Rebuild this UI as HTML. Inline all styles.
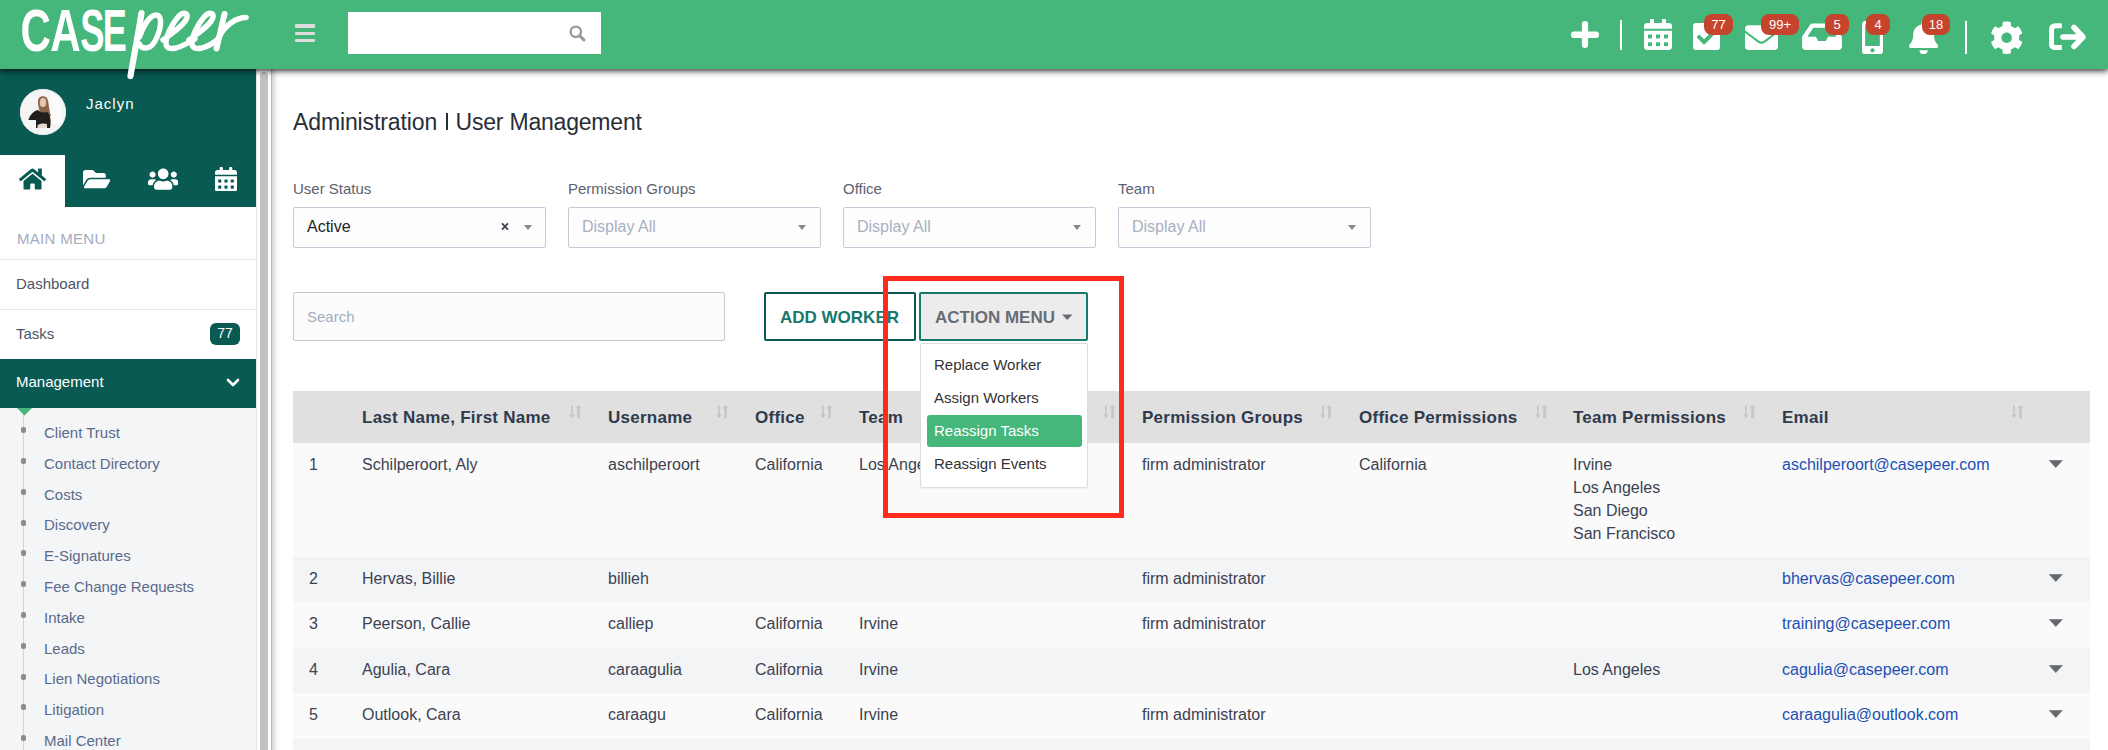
<!DOCTYPE html>
<html><head><meta charset="utf-8">
<style>
*{box-sizing:border-box;margin:0;padding:0}
html,body{width:2108px;height:750px;overflow:hidden;background:#fff;font-family:"Liberation Sans",sans-serif}
.a{position:absolute}
.t{position:absolute;white-space:nowrap;line-height:1}
#hdr{left:0;top:0;width:2108px;height:69px;background:#45b77b;box-shadow:0 2px 6px rgba(0,0,0,.8);z-index:5}
.bdg{top:14px;height:21px;border-radius:8px;background:#c6432c;color:#fff;font-size:13px;line-height:22.5px;text-align:center}
.sel{top:207px;width:253px;height:41px;border:1px solid #c5cad6;border-radius:2px;background:#fdfdfd}
.car{top:224.5px;width:0;height:0;border-left:4px solid transparent;border-right:4px solid transparent;border-top:5px solid #85888d}
.th{top:409px;font-size:17px;font-weight:bold;color:#2f3a4c;letter-spacing:0.25px}
.td{font-size:16px;color:#3b4252}
.em{color:#2150b2}
</style></head><body>
<div id="hdr" class="a">
<svg class="a" style="left:0;top:0;overflow:visible" width="260" height="80" viewBox="0 0 260 80">
<g fill="#fff" font-family="Liberation Sans" font-weight="bold" font-size="59">
<text transform="translate(20.6,51) scale(0.713,1)">C</text>
<text transform="translate(50.3,51) scale(0.715,1)">A</text>
<text transform="translate(80.2,51) scale(0.617,1)">S</text>
<text transform="translate(102.75,51) scale(0.612,1)">E</text>
</g>
<g fill="none" stroke="#fff" stroke-linecap="round" stroke-linejoin="round">
<path d="M141.5,13 C139,30 134,55 130.5,76" stroke-width="6.2"/>
<path d="M139.5,37 C143,26 150,15 156,15 C161,15 161.5,22 159.5,30 C156.5,40 152,48 146,48 C142,48 140,46 139.5,44" stroke-width="5.4"/>
<path d="M163,40 C171,34 186,24 187,17 C188,12 182,12 178,17 C172,24 166,36 166,43 C166,49 171,49 176,48 C183,46 190,42 195,39" stroke-width="5.4"/>
<path d="M189,40 C197,34 212,24 213,17 C214,12 208,12 204,17 C198,24 192,36 192,43 C192,49 197,49 202,48 C209,46 215,42 219,38" stroke-width="5.4"/>
<path d="M224.5,14 C222,25 219,38 216.5,48.5" stroke-width="6"/>
<path d="M220,35 C226,25 236,17.5 246,17.5" stroke-width="5.6"/>
</g>
</svg>
<div class="a" style="left:295px;top:24.2px;width:20px;height:3.4px;background:#dcdcdc;border-radius:1px"></div>
<div class="a" style="left:295px;top:31.7px;width:20px;height:3.4px;background:#dcdcdc;border-radius:1px"></div>
<div class="a" style="left:295px;top:39px;width:20px;height:3.4px;background:#dcdcdc;border-radius:1px"></div>
<div class="a" style="left:348px;top:12px;width:253px;height:42px;background:#fff"></div>
<svg class="a" style="left:566px;top:22px" width="24" height="24" viewBox="0 0 24 24"><circle cx="9.8" cy="9.8" r="5.2" fill="none" stroke="#9a9a9a" stroke-width="2.4"/><line x1="13.6" y1="13.6" x2="18" y2="18" stroke="#9a9a9a" stroke-width="3" stroke-linecap="round"/></svg>
<!-- plus -->
<svg class="a" style="left:1571px;top:21px" width="28" height="27" viewBox="0 0 28 27"><rect x="0" y="10.5" width="28" height="6.4" rx="3" fill="#fff"/><rect x="10.9" y="0" width="6.2" height="27" rx="3" fill="#fff"/></svg>
<div class="a" style="left:1620px;top:20px;width:2px;height:30px;background:#fff"></div>
<!-- calendar -->
<svg class="a" style="left:1644px;top:19px" width="28" height="31" viewBox="0 0 448 512" preserveAspectRatio="none"><path fill="#fff" d="M0 464c0 26.5 21.5 48 48 48h352c26.5 0 48-21.5 48-48V192H0v272zm320-196c0-6.6 5.4-12 12-12h40c6.6 0 12 5.4 12 12v40c0 6.6-5.4 12-12 12h-40c-6.6 0-12-5.4-12-12v-40zm0 128c0-6.600 5.4-12 12-12h40c6.6 0 12 5.4 12 12v40c0 6.6-5.4 12-12 12h-40c-6.6 0-12-5.4-12-12v-40zM192 268c0-6.6 5.4-12 12-12h40c6.6 0 12 5.4 12 12v40c0 6.6-5.4 12-12 12h-40c-6.6 0-12-5.4-12-12v-40zm0 128c0-6.6 5.4-12 12-12h40c6.6 0 12 5.4 12 12v40c0 6.6-5.4 12-12 12h-40c-6.6 0-12-5.4-12-12v-40zM64 268c0-6.6 5.4-12 12-12h40c6.6 0 12 5.4 12 12v40c0 6.6-5.4 12-12 12H76c-6.6 0-12-5.4-12-12v-40zm0 128c0-6.6 5.4-12 12-12h40c6.6 0 12 5.4 12 12v40c0 6.6-5.4 12-12 12H76c-6.6 0-12-5.4-12-12v-40zM400 64h-48V16c0-8.8-7.2-16-16-16h-32c-8.8 0-16 7.2-16 16v48H160V16c0-8.8-7.2-16-16-16h-32c-8.8 0-16 7.2-16 16v48H48C21.5 64 0 85.5 0 112v48h448v-48c0-26.5-21.5-48-48-48z"/></svg>
<!-- check square -->
<svg class="a" style="left:1693px;top:21px" width="27" height="31" viewBox="0 0 448 512" preserveAspectRatio="none"><path fill="#fff" d="M400 480H48c-26.51 0-48-21.49-48-48V80c0-26.51 21.49-48 48-48h352c26.51 0 48 21.49 48 48v352c0 26.51-21.49 48-48 48zm-204.686-98.059l184-184c6.248-6.248 6.248-16.379 0-22.627l-22.627-22.627c-6.248-6.248-16.379-6.249-22.628 0L184 302.745l-70.059-70.059c-6.248-6.248-16.379-6.248-22.628 0l-22.627 22.627c-6.248 6.248-6.248 16.379 0 22.627l104 104c6.249 6.25 16.379 6.25 22.628.001z"/></svg>
<!-- envelope -->
<svg class="a" style="left:1745px;top:21px" width="33" height="33" viewBox="0 0 512 512"><path fill="#fff" d="M502.3 190.8c3.9-3.1 9.7-.2 9.7 4.7V400c0 26.5-21.5 48-48 48H48c-26.5 0-48-21.5-48-48V195.6c0-5 5.7-7.8 9.7-4.700 22.4 17.4 52.1 39.5 154.1 113.6 21.1 15.4 56.7 47.8 92.2 47.6 35.7.3 72-32.8 92.3-47.6 102-74.1 131.6-96.3 154-113.700zM256 320c23.2.4 56.6-29.2 73.4-41.4 132.7-96.3 142.8-104.7 173.4-128.7 5.8-4.5 9.2-11.5 9.2-18.9v-19c0-26.5-21.5-48-48-48H48C21.5 64 0 85.5 0 112v19c0 7.4 3.4 14.3 9.2 18.9 30.6 23.9 40.7 32.4 173.4 128.7 16.8 12.2 50.2 41.8 73.4 41.4z"/></svg>
<!-- inbox -->
<svg class="a" style="left:1802px;top:19.3px" width="40" height="35.4" viewBox="0 0 576 512"><path fill="#fff" d="M567.938 243.908L462.25 85.374A48.003 48.003 0 0 0 422.311 64H153.689a48 48 0 0 0-39.938 21.374L8.062 243.908A47.994 47.994 0 0 0 0 270.533V400c0 26.51 21.49 48 48 48h480c26.51 0 48-21.49 48-48V270.533a47.994 47.994 0 0 0-8.062-26.625zM162.252 128h251.497l85.333 128H376l-32 64H232l-32-64H76.918l85.334-128z"/></svg>
<!-- mobile -->
<svg class="a" style="left:1862px;top:20.9px" width="21" height="33.4" viewBox="0 0 320 512" preserveAspectRatio="none"><path fill="#fff" d="M272 0H48C21.5 0 0 21.5 0 48v416c0 26.5 21.5 48 48 48h224c26.5 0 48-21.5 48-48V48c0-26.5-21.5-48-48-48zM160 480c-17.7 0-32-14.3-32-32s14.3-32 32-32 32 14.3 32 32-14.3 32-32 32zm112-108c0 6.6-5.4 12-12 12H60c-6.6 0-12-5.4-12-12V60c0-6.6 5.4-12 12-12h200c6.6 0 12 5.4 12 12v312z"/></svg>
<!-- bell -->
<svg class="a" style="left:1909px;top:20.7px" width="29.2" height="33.4" viewBox="0 0 448 512"><path fill="#fff" d="M224 512c35.32 0 63.970-28.65 63.970-64H160.030c0 35.35 28.650 64 63.970 64zm215.390-149.710c-19.320-20.760-55.470-51.990-55.470-154.290 0-77.700-54.480-139.900-127.940-155.160V32c0-17.670-14.320-32-32-32s-32 14.330-32 32v20.840C118.560 68.100 64.080 130.300 64.080 208c0 102.300-36.150 133.530-55.470 154.290-6 6.450-8.660 14.160-8.610 21.710.11 16.400 12.980 32 32.100 32h383.800c19.120 0 32-15.600 32.100-32 .05-7.550-2.610-15.270-8.610-21.710z"/></svg>
<div class="a" style="left:1965px;top:21px;width:2px;height:33px;background:#fff"></div>
<!-- cog -->
<svg class="a" style="left:1989.8px;top:21.1px" width="33.4" height="33.4" viewBox="0 0 512 512"><path fill="#fff" d="M487.4 315.7l-42.6-24.6c4.3-23.2 4.3-47 0-70.2l42.6-24.6c4.9-2.8 7.1-8.6 5.5-14-11.1-35.6-30-67.8-54.7-94.6-3.8-4.1-10-5.1-14.8-2.3L380.8 110c-17.9-15.4-38.5-27.3-60.8-35.1V25.8c0-5.6-3.9-10.5-9.4-11.7-36.7-8.2-74.3-7.8-109.2 0-5.5 1.2-9.4 6.1-9.4 11.7V75c-22.2 7.9-42.8 19.8-60.8 35.1L88.7 85.5c-4.9-2.8-11-1.9-14.8 2.3-24.7 26.7-43.6 58.9-54.7 94.6-1.7 5.4.6 11.2 5.5 14L67.3 221c-4.3 23.2-4.3 47 0 70.2l-42.6 24.6c-4.9 2.8-7.1 8.6-5.5 14 11.1 35.6 30 67.8 54.7 94.6 3.8 4.1 10 5.1 14.8 2.3l42.6-24.6c17.9 15.4 38.5 27.3 60.8 35.1v49.2c0 5.6 3.9 10.5 9.4 11.7 36.7 8.2 74.3 7.8 109.2 0 5.5-1.2 9.4-6.1 9.4-11.7v-49.2c22.2-7.9 42.8-19.8 60.8-35.1l42.6 24.6c4.9 2.8 11 1.9 14.8-2.3 24.7-26.7 43.6-58.9 54.7-94.6 1.5-5.5-.7-11.3-5.6-14.1zM256 336c-44.1 0-80-35.9-80-80s35.9-80 80-80 80 35.9 80 80-35.9 80-80 80z"/></svg>
<!-- sign out -->
<svg class="a" style="left:2046px;top:20px" width="42" height="34" viewBox="0 0 42 34"><path d="M15.8 5.8H9.5C6.8 5.8 5.5 7.3 5.5 10V24C5.5 26.7 6.8 27.5 9.5 27.5H15.8" fill="none" stroke="#fff" stroke-width="5"/><path d="M17 17H35M28 7.5L37 17L28 26.5" fill="none" stroke="#fff" stroke-width="5.6" stroke-linecap="round" stroke-linejoin="round"/></svg>
<!-- badges -->
<div class="a bdg" style="left:1704px;width:29px">77</div>
<div class="a bdg" style="left:1761px;width:38px">99+</div>
<div class="a bdg" style="left:1825px;width:24px">5</div>
<div class="a bdg" style="left:1866px;width:24px">4</div>
<div class="a bdg" style="left:1922px;width:28px">18</div>
</div>
<div class="a" style="left:0;top:69px;width:256px;height:138px;background:#085a52"></div>
<div class="a" style="left:0;top:155px;width:65px;height:52px;background:#fff"></div>
<!-- avatar -->
<svg class="a" style="left:20px;top:89px" width="46" height="46" viewBox="0 0 46 46">
<defs><clipPath id="cc"><circle cx="23" cy="23" r="23"/></clipPath></defs>
<circle cx="23" cy="23" r="23" fill="#f4f4f4"/>
<g clip-path="url(#cc)">
<rect x="30" y="5" width="12" height="30" fill="#fbfbfb"/>
<path d="M18,12 C18,6 27,5.5 28,11.5 C29,18 29.5,23 31,27 L23,29 C20,25 18,18 18,12Z" fill="#8f6446"/>
<ellipse cx="23" cy="13.5" rx="3.2" ry="4.6" fill="#e2c5b2"/>
<path d="M7.5,34 C9,27 13,22 18,21 C20,23.5 24,24 27,23 C30,25 31,30 30.5,36 L30,39 L10,39Z" fill="#231e1e"/>
<path d="M17.5,36 C20,34.5 24,34 27,35 L27,39 L17.5,39Z" fill="#e4d8d0"/>
<rect x="3" y="31" width="13" height="14" fill="#f7f7f7"/>
</g>
<circle cx="23" cy="23" r="22.5" fill="none" stroke="#e8eaea" stroke-width="1"/>
</svg>
<div class="t" style="left:86px;top:96px;font-size:15px;color:#fff;letter-spacing:1px">Jaclyn</div>
<!-- tab icons -->
<svg class="a" style="left:18.6px;top:166.5px" width="27" height="24" viewBox="0 0 576 512"><path fill="#085a52" d="M280.37 148.26L96 300.11V464a16 16 0 0 0 16 16l112.06-.29a16 16 0 0 0 15.92-16V368a16 16 0 0 1 16-16h64a16 16 0 0 1 16 16v95.64a16 16 0 0 0 16 16.05L464 480a16 16 0 0 0 16-16V300L295.67 148.26a12.19 12.19 0 0 0-15.3 0zM571.6 251.47L488 182.56V44.05a12 12 0 0 0-12-12h-56a12 12 0 0 0-12 12v72.61L318.47 43a48 48 0 0 0-61 0L4.34 251.47a12 12 0 0 0-1.6 16.9l25.5 31A12 12 0 0 0 45.15 301l235.22-193.74a12.19 12.19 0 0 1 15.3 0L530.9 301a12 12 0 0 0 16.9-1.6l25.5-31a12 12 0 0 0-1.7-16.93z"/></svg>
<svg class="a" style="left:83px;top:167.2px" width="27.4" height="24.4" viewBox="0 0 576 512"><path fill="#fff" d="M572.694 292.093L500.27 416.248A63.997 63.997 0 0 1 444.989 448H45.025c-18.523 0-30.064-20.093-20.731-36.093l72.424-124.155A64 64 0 0 1 152 256h399.964c18.523 0 30.064 20.093 20.73 36.093zM152 224h328v-48c0-26.51-21.49-48-48-48H272l-64-64H48C21.49 64 0 85.49 0 112v278.046l69.077-118.418C86.214 242.25 117.989 224 152 224z"/></svg>
<svg class="a" style="left:148px;top:166.5px" width="30.4" height="24.3" viewBox="0 0 640 512"><path fill="#fff" d="M96 224c35.3 0 64-28.7 64-64s-28.7-64-64-64-64 28.7-64 64 28.7 64 64 64zm448 0c35.3 0 64-28.7 64-64s-28.7-64-64-64-64 28.7-64 64 28.7 64 64 64zm32 32h-64c-17.6 0-33.5 7.1-45.1 18.6 40.3 22.1 68.9 62 75.1 109.4h66c17.7 0 32-14.3 32-32v-32c0-35.3-28.7-64-64-64zm-256 0c61.9 0 112-50.1 112-112S381.9 32 320 32 208 82.1 208 144s50.1 112 112 112zm76.8 32h-8.3c-20.8 10-43.9 16-68.5 16s-47.6-6-68.5-16h-8.3C179.6 288 128 339.6 128 403.2V432c0 26.5 21.5 48 48 48h288c26.5 0 48-21.5 48-48v-28.8c0-63.6-51.6-115.2-115.2-115.2zm-223.7-13.4C161.5 263.1 145.6 256 128 256H64c-35.3 0-64 28.7-64 64v32c0 17.7 14.3 32 32 32h65.9c6.3-47.4 34.9-87.3 75.2-109.4z"/></svg>
<svg class="a" style="left:215px;top:166.6px" width="22" height="24.8" viewBox="0 0 448 512" preserveAspectRatio="none"><path fill="#fff" d="M0 464c0 26.5 21.5 48 48 48h352c26.5 0 48-21.5 48-48V192H0v272zm320-196c0-6.6 5.4-12 12-12h40c6.6 0 12 5.4 12 12v40c0 6.6-5.4 12-12 12h-40c-6.6 0-12-5.4-12-12v-40zm0 128c0-6.6 5.4-12 12-12h40c6.6 0 12 5.4 12 12v40c0 6.6-5.4 12-12 12h-40c-6.6 0-12-5.4-12-12v-40zM192 268c0-6.6 5.4-12 12-12h40c6.6 0 12 5.4 12 12v40c0 6.6-5.4 12-12 12h-40c-6.6 0-12-5.4-12-12v-40zm0 128c0-6.6 5.4-12 12-12h40c6.6 0 12 5.4 12 12v40c0 6.6-5.4 12-12 12h-40c-6.6 0-12-5.4-12-12v-40zM64 268c0-6.6 5.4-12 12-12h40c6.6 0 12 5.4 12 12v40c0 6.6-5.4 12-12 12H76c-6.6 0-12-5.4-12-12v-40zm0 128c0-6.6 5.4-12 12-12h40c6.6 0 12 5.4 12 12v40c0 6.6-5.4 12-12 12H76c-6.6 0-12-5.4-12-12v-40zM400 64h-48V16c0-8.8-7.2-16-16-16h-32c-8.8 0-16 7.2-16 16v48H160V16c0-8.8-7.2-16-16-16h-32c-8.8 0-16 7.2-16 16v48H48C21.5 64 0 85.5 0 112v48h448v-48c0-26.5-21.5-48-48-48z"/></svg>
<!-- main menu -->
<div class="a" style="left:0;top:207px;width:256px;height:152px;background:#fff"></div>
<div class="t" style="left:17px;top:230.5px;font-size:15px;color:#a3acc1;letter-spacing:0.3px">MAIN MENU</div>
<div class="a" style="left:0;top:259px;width:256px;height:1px;background:#e6e7ea"></div>
<div class="t" style="left:16px;top:276px;font-size:15px;color:#4b5468">Dashboard</div>
<div class="a" style="left:0;top:309px;width:256px;height:1px;background:#e6e7ea"></div>
<div class="t" style="left:16px;top:326px;font-size:15px;color:#4b5468">Tasks</div>
<div class="a" style="left:210px;top:323px;width:30px;height:22px;border-radius:6px;background:#085a52;color:#fff;font-size:14px;line-height:21px;text-align:center">77</div>
<div class="a" style="left:0;top:359px;width:256px;height:49px;background:#085a52"></div>
<div class="t" style="left:16px;top:374px;font-size:15px;color:#fff">Management</div>
<svg class="a" style="left:226px;top:377px" width="14" height="12" viewBox="0 0 14 12"><path d="M2 3L7 8L12 3" fill="none" stroke="#fff" stroke-width="2.6" stroke-linecap="round" stroke-linejoin="round"/></svg>
<div class="a" style="left:0;top:408px;width:256px;height:342px;background:#f4f5f7"></div>
<div class="a" style="left:23px;top:408px;width:1px;height:342px;background:#d0d2d6"></div>
<svg class="a" style="left:17px;top:408px" width="15" height="8" viewBox="0 0 15 8"><path d="M0 0H15L7.5 7.5Z" fill="#45b77b"/></svg>
<div class="a" style="left:21px;top:427.2px;width:5px;height:6px;border-radius:2px;background:#8c8c8c"></div>
<div class="t" style="left:44px;top:425.0px;font-size:15px;color:#5a6a8b">Client Trust</div>
<div class="a" style="left:21px;top:458.0px;width:5px;height:6px;border-radius:2px;background:#8c8c8c"></div>
<div class="t" style="left:44px;top:455.8px;font-size:15px;color:#5a6a8b">Contact Directory</div>
<div class="a" style="left:21px;top:488.8px;width:5px;height:6px;border-radius:2px;background:#8c8c8c"></div>
<div class="t" style="left:44px;top:486.6px;font-size:15px;color:#5a6a8b">Costs</div>
<div class="a" style="left:21px;top:519.6px;width:5px;height:6px;border-radius:2px;background:#8c8c8c"></div>
<div class="t" style="left:44px;top:517.4px;font-size:15px;color:#5a6a8b">Discovery</div>
<div class="a" style="left:21px;top:550.4px;width:5px;height:6px;border-radius:2px;background:#8c8c8c"></div>
<div class="t" style="left:44px;top:548.2px;font-size:15px;color:#5a6a8b">E-Signatures</div>
<div class="a" style="left:21px;top:581.2px;width:5px;height:6px;border-radius:2px;background:#8c8c8c"></div>
<div class="t" style="left:44px;top:579.0px;font-size:15px;color:#5a6a8b">Fee Change Requests</div>
<div class="a" style="left:21px;top:612.0px;width:5px;height:6px;border-radius:2px;background:#8c8c8c"></div>
<div class="t" style="left:44px;top:609.8px;font-size:15px;color:#5a6a8b">Intake</div>
<div class="a" style="left:21px;top:642.8px;width:5px;height:6px;border-radius:2px;background:#8c8c8c"></div>
<div class="t" style="left:44px;top:640.6px;font-size:15px;color:#5a6a8b">Leads</div>
<div class="a" style="left:21px;top:673.6px;width:5px;height:6px;border-radius:2px;background:#8c8c8c"></div>
<div class="t" style="left:44px;top:671.4px;font-size:15px;color:#5a6a8b">Lien Negotiations</div>
<div class="a" style="left:21px;top:704.4px;width:5px;height:6px;border-radius:2px;background:#8c8c8c"></div>
<div class="t" style="left:44px;top:702.2px;font-size:15px;color:#5a6a8b">Litigation</div>
<div class="a" style="left:21px;top:735.2px;width:5px;height:6px;border-radius:2px;background:#8c8c8c"></div>
<div class="t" style="left:44px;top:733.0px;font-size:15px;color:#5a6a8b">Mail Center</div>
<div class="a" style="left:256px;top:69px;width:16px;height:681px;background:#fdfdfd;border-left:1px solid #e4e4e4"></div>
<div class="a" style="left:260px;top:72px;width:8px;height:700px;border-radius:4px;background:#c1c1c1"></div>
<div class="a" style="left:271px;top:69px;width:1px;height:681px;background:#b6b6b6"></div>
<div class="a" style="left:272px;top:69px;width:9px;height:681px;background:linear-gradient(to right,rgba(0,0,0,.165) 0px,rgba(0,0,0,.14) 1px,rgba(0,0,0,.1) 2px,rgba(0,0,0,.075) 3px,rgba(0,0,0,.047) 4px,rgba(0,0,0,.027) 5px,rgba(0,0,0,.015) 6px,rgba(0,0,0,.006) 7px,rgba(0,0,0,0) 9px)"></div>
<div class="t" style="left:293px;top:111px;font-size:23px;color:#282d39;letter-spacing:-0.12px">Administration</div>
<div class="a" style="left:445.8px;top:113px;width:2.2px;height:17px;background:#282d39"></div>
<div class="t" style="left:455.5px;top:111px;font-size:23px;color:#282d39;letter-spacing:-0.2px">User Management</div>
<div class="t" style="left:293px;top:181px;font-size:15px;color:#5c6270">User Status</div>
<div class="t" style="left:568px;top:181px;font-size:15px;color:#5c6270">Permission Groups</div>
<div class="t" style="left:843px;top:181px;font-size:15px;color:#5c6270">Office</div>
<div class="t" style="left:1118px;top:181px;font-size:15px;color:#5c6270">Team</div>
<div class="a sel" style="left:293px"></div>
<div class="a sel" style="left:568px"></div>
<div class="a sel" style="left:843px"></div>
<div class="a sel" style="left:1118px"></div>
<div class="t" style="left:307px;top:219px;font-size:16px;color:#222">Active</div>
<svg class="a" style="left:500px;top:221px" width="10" height="11" viewBox="0 0 10 11"><path d="M2 2.3L8 8.6M8 2.3L2 8.6" stroke="#3b404b" stroke-width="1.7"/></svg>
<div class="t" style="left:582px;top:219px;font-size:16px;color:#a9b0c1">Display All</div>
<div class="t" style="left:857px;top:219px;font-size:16px;color:#a9b0c1">Display All</div>
<div class="t" style="left:1132px;top:219px;font-size:16px;color:#a9b0c1">Display All</div>
<div class="a car" style="left:524px"></div>
<div class="a car" style="left:798px"></div>
<div class="a car" style="left:1073px"></div>
<div class="a car" style="left:1348px"></div>
<div class="a" style="left:293px;top:292px;width:432px;height:49px;border:1px solid #c3c8d6;border-radius:2px;background:#fcfcfd"></div>
<div class="t" style="left:307px;top:309px;font-size:15px;color:#a4abbd">Search</div>
<div class="a" style="left:764px;top:292px;width:152px;height:49px;border:2px solid #085a52;border-radius:2px;background:#fff"></div>
<div class="t" style="left:780px;top:309px;font-size:17px;font-weight:bold;color:#17796d">ADD WORKER</div>
<div class="a" style="left:919px;top:292px;width:169px;height:49px;border:2px solid #17796d;border-radius:2px;background:#ececec"></div>
<div class="t" style="left:935px;top:309px;font-size:17px;font-weight:bold;color:#6a6d76">ACTION MENU</div>
<svg class="a" style="left:1062px;top:314px" width="11" height="7" viewBox="0 0 11 7"><path d="M0 0.5H10.5L5.25 6Z" fill="#6a6d76"/></svg>
<div class="a" style="left:293px;top:391px;width:1797px;height:52px;background:#e0e0e0"></div>
<div class="a" style="left:293px;top:443px;width:1797px;height:114px;background:#fafafa"></div>
<div class="a" style="left:293px;top:557px;width:1797px;height:45px;background:#f3f4f6"></div>
<div class="a" style="left:293px;top:602px;width:1797px;height:46px;background:#fafafa"></div>
<div class="a" style="left:293px;top:648px;width:1797px;height:45px;background:#f3f4f6"></div>
<div class="a" style="left:293px;top:693px;width:1797px;height:45.5px;background:#fafafa"></div>
<div class="a" style="left:293px;top:738.5px;width:1797px;height:11.5px;background:#f3f4f6"></div>
<div class="t th" style="left:362px">Last Name, First Name</div>
<div class="t th" style="left:608px">Username</div>
<div class="t th" style="left:755px">Office</div>
<div class="t th" style="left:859px">Team</div>
<div class="t th" style="left:1142px">Permission Groups</div>
<div class="t th" style="left:1359px">Office Permissions</div>
<div class="t th" style="left:1573px">Team Permissions</div>
<div class="t th" style="left:1782px">Email</div>
<div class="a" style="left:569px;top:405.4px;width:13px;height:14px;line-height:0"><svg width="13" height="14" viewBox="0 0 13 14"><path d="M3 0.3V10.5" stroke="#c5c6ca" stroke-width="1.7"/><path d="M0 9.6H6L3 13.2Z" fill="#c5c6ca"/><path d="M9.5 3V13.2" stroke="#c5c6ca" stroke-width="2.6"/><path d="M6.4 3.2H12.4L9.4 0Z" fill="#c5c6ca"/></svg></div>
<div class="a" style="left:716px;top:405.4px;width:13px;height:14px;line-height:0"><svg width="13" height="14" viewBox="0 0 13 14"><path d="M3 0.3V10.5" stroke="#c5c6ca" stroke-width="1.7"/><path d="M0 9.6H6L3 13.2Z" fill="#c5c6ca"/><path d="M9.5 3V13.2" stroke="#c5c6ca" stroke-width="2.6"/><path d="M6.4 3.2H12.4L9.4 0Z" fill="#c5c6ca"/></svg></div>
<div class="a" style="left:820px;top:405.4px;width:13px;height:14px;line-height:0"><svg width="13" height="14" viewBox="0 0 13 14"><path d="M3 0.3V10.5" stroke="#c5c6ca" stroke-width="1.7"/><path d="M0 9.6H6L3 13.2Z" fill="#c5c6ca"/><path d="M9.5 3V13.2" stroke="#c5c6ca" stroke-width="2.6"/><path d="M6.4 3.2H12.4L9.4 0Z" fill="#c5c6ca"/></svg></div>
<div class="a" style="left:1103px;top:405.4px;width:13px;height:14px;line-height:0"><svg width="13" height="14" viewBox="0 0 13 14"><path d="M3 0.3V10.5" stroke="#c5c6ca" stroke-width="1.7"/><path d="M0 9.6H6L3 13.2Z" fill="#c5c6ca"/><path d="M9.5 3V13.2" stroke="#c5c6ca" stroke-width="2.6"/><path d="M6.4 3.2H12.4L9.4 0Z" fill="#c5c6ca"/></svg></div>
<div class="a" style="left:1320px;top:405.4px;width:13px;height:14px;line-height:0"><svg width="13" height="14" viewBox="0 0 13 14"><path d="M3 0.3V10.5" stroke="#c5c6ca" stroke-width="1.7"/><path d="M0 9.6H6L3 13.2Z" fill="#c5c6ca"/><path d="M9.5 3V13.2" stroke="#c5c6ca" stroke-width="2.6"/><path d="M6.4 3.2H12.4L9.4 0Z" fill="#c5c6ca"/></svg></div>
<div class="a" style="left:1535px;top:405.4px;width:13px;height:14px;line-height:0"><svg width="13" height="14" viewBox="0 0 13 14"><path d="M3 0.3V10.5" stroke="#c5c6ca" stroke-width="1.7"/><path d="M0 9.6H6L3 13.2Z" fill="#c5c6ca"/><path d="M9.5 3V13.2" stroke="#c5c6ca" stroke-width="2.6"/><path d="M6.4 3.2H12.4L9.4 0Z" fill="#c5c6ca"/></svg></div>
<div class="a" style="left:1743px;top:405.4px;width:13px;height:14px;line-height:0"><svg width="13" height="14" viewBox="0 0 13 14"><path d="M3 0.3V10.5" stroke="#c5c6ca" stroke-width="1.7"/><path d="M0 9.6H6L3 13.2Z" fill="#c5c6ca"/><path d="M9.5 3V13.2" stroke="#c5c6ca" stroke-width="2.6"/><path d="M6.4 3.2H12.4L9.4 0Z" fill="#c5c6ca"/></svg></div>
<div class="a" style="left:2010.5px;top:405.4px;width:13px;height:14px;line-height:0"><svg width="13" height="14" viewBox="0 0 13 14"><path d="M3 0.3V10.5" stroke="#c5c6ca" stroke-width="1.7"/><path d="M0 9.6H6L3 13.2Z" fill="#c5c6ca"/><path d="M9.5 3V13.2" stroke="#c5c6ca" stroke-width="2.6"/><path d="M6.4 3.2H12.4L9.4 0Z" fill="#c5c6ca"/></svg></div>
<div class="t td" style="left:309px;top:456.5px">1</div>
<div class="t td" style="left:362px;top:456.5px">Schilperoort, Aly</div>
<div class="t td" style="left:608px;top:456.5px">aschilperoort</div>
<div class="t td" style="left:755px;top:456.5px">California</div>
<div class="t td" style="left:859px;top:456.5px">Los Angeles</div>
<div class="t td" style="left:1142px;top:456.5px">firm administrator</div>
<div class="t td" style="left:1359px;top:456.5px">California</div>
<div class="t td" style="left:1573px;top:456.5px">Irvine</div>
<div class="t td em" style="left:1782px;top:456.5px">aschilperoort@casepeer.com</div>
<svg class="a" style="left:2049px;top:460.0px" width="14" height="8" viewBox="0 0 14 8"><path d="M0.3 0.5H13.3L6.8 7.6Z" fill="#65696f" stroke="#65696f" stroke-width="0.6" stroke-linejoin="round"/></svg>
<div class="t td" style="left:309px;top:571px">2</div>
<div class="t td" style="left:362px;top:571px">Hervas, Billie</div>
<div class="t td" style="left:608px;top:571px">billieh</div>
<div class="t td" style="left:1142px;top:571px">firm administrator</div>
<div class="t td em" style="left:1782px;top:571px">bhervas@casepeer.com</div>
<svg class="a" style="left:2049px;top:573.5px" width="14" height="8" viewBox="0 0 14 8"><path d="M0.3 0.5H13.3L6.8 7.6Z" fill="#65696f" stroke="#65696f" stroke-width="0.6" stroke-linejoin="round"/></svg>
<div class="t td" style="left:309px;top:616px">3</div>
<div class="t td" style="left:362px;top:616px">Peerson, Callie</div>
<div class="t td" style="left:608px;top:616px">calliep</div>
<div class="t td" style="left:755px;top:616px">California</div>
<div class="t td" style="left:859px;top:616px">Irvine</div>
<div class="t td" style="left:1142px;top:616px">firm administrator</div>
<div class="t td em" style="left:1782px;top:616px">training@casepeer.com</div>
<svg class="a" style="left:2049px;top:618.5px" width="14" height="8" viewBox="0 0 14 8"><path d="M0.3 0.5H13.3L6.8 7.6Z" fill="#65696f" stroke="#65696f" stroke-width="0.6" stroke-linejoin="round"/></svg>
<div class="t td" style="left:309px;top:662px">4</div>
<div class="t td" style="left:362px;top:662px">Agulia, Cara</div>
<div class="t td" style="left:608px;top:662px">caraagulia</div>
<div class="t td" style="left:755px;top:662px">California</div>
<div class="t td" style="left:859px;top:662px">Irvine</div>
<div class="t td" style="left:1573px;top:662px">Los Angeles</div>
<div class="t td em" style="left:1782px;top:662px">cagulia@casepeer.com</div>
<svg class="a" style="left:2049px;top:664.5px" width="14" height="8" viewBox="0 0 14 8"><path d="M0.3 0.5H13.3L6.8 7.6Z" fill="#65696f" stroke="#65696f" stroke-width="0.6" stroke-linejoin="round"/></svg>
<div class="t td" style="left:309px;top:707px">5</div>
<div class="t td" style="left:362px;top:707px">Outlook, Cara</div>
<div class="t td" style="left:608px;top:707px">caraagu</div>
<div class="t td" style="left:755px;top:707px">California</div>
<div class="t td" style="left:859px;top:707px">Irvine</div>
<div class="t td" style="left:1142px;top:707px">firm administrator</div>
<div class="t td em" style="left:1782px;top:707px">caraagulia@outlook.com</div>
<svg class="a" style="left:2049px;top:709.5px" width="14" height="8" viewBox="0 0 14 8"><path d="M0.3 0.5H13.3L6.8 7.6Z" fill="#65696f" stroke="#65696f" stroke-width="0.6" stroke-linejoin="round"/></svg>
<div class="t td" style="left:1573px;top:479.5px">Los Angeles</div>
<div class="t td" style="left:1573px;top:502.5px">San Diego</div>
<div class="t td" style="left:1573px;top:525.5px">San Francisco</div>
<div class="a" style="left:920px;top:343px;width:168px;height:145px;border:1px solid #dcdcdc;border-radius:2px;background:#fff;box-shadow:0 1px 2px rgba(0,0,0,.05)"></div>
<div class="t" style="left:934px;top:357px;font-size:15px;color:#333">Replace Worker</div>
<div class="t" style="left:934px;top:390px;font-size:15px;color:#333">Assign Workers</div>
<div class="a" style="left:927px;top:415px;width:155px;height:32px;border-radius:3px;background:#45b77b"></div>
<div class="t" style="left:934px;top:423px;font-size:15px;color:#fff">Reassign Tasks</div>
<div class="t" style="left:934px;top:456px;font-size:15px;color:#333">Reassign Events</div>
<div class="a" style="left:883px;top:276px;width:241px;height:242px;border:5.5px solid #ff2b1c"></div>
</body></html>
